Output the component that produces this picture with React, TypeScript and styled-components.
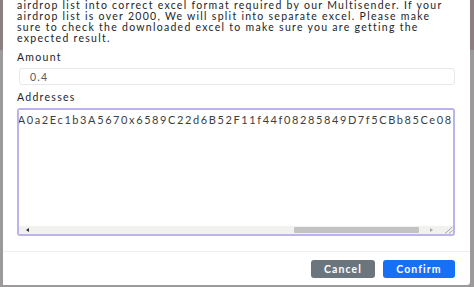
import { useEffect, useRef } from "react";
import styled, { createGlobalStyle } from "styled-components";

const GlobalStyle = createGlobalStyle`
  html, body {
    margin: 0;
    padding: 0;
    background: #9c9a9a;
  }
  body {
    font-family: Lato, "Liberation Sans", sans-serif;
  }
`;

const Backdrop = styled.div`
  width: 474px;
  height: 287px;
  display: flex;
  padding-left: 3px;
  box-sizing: border-box;
  overflow: hidden;
  background: linear-gradient(#8d7f7f 0 50px, #9c9a9a 50px);
`;

const Modal = styled.div`
  width: 467px;
  height: 285px;
  background: #ffffff;
  display: flex;
  flex-direction: column;
  border-bottom-right-radius: 3px;
`;

const Body = styled.div`
  flex: 1;
  padding: 0 15px 0 14px;
`;

const Intro = styled.p`
  margin: 0;
  font-size: 10.5px;
  line-height: 11px;
  color: #212529;
  letter-spacing: 1.28px;
  white-space: nowrap;
`;

const Label = styled.div<{ $top: number }>`
  font-size: 10.5px;
  color: #212529;
  letter-spacing: 1.28px;
  margin: ${(p) => p.$top}px 0 4px 0;
  line-height: 14px;
`;

const Input = styled.input`
  display: block;
  box-sizing: border-box;
  height: 17px;
  margin-left: 2px;
  width: calc(100% - 2px);
  padding: 0 10px;
  border: 1px solid #e6e8eb;
  border-radius: 3px;
  font-family: Lato, "Liberation Sans", sans-serif;
  font-size: 10.5px;
  color: #555a5f;
  letter-spacing: 1.2px;
  outline: none;
`;

const AreaBox = styled.div`
  height: 128px;
  box-sizing: border-box;
  border: 2px solid #bbb4ec;
  border-radius: 3px;
  display: flex;
  flex-direction: column;
  overflow: hidden;
`;

const Area = styled.textarea`
  flex: 1;
  display: block;
  width: 100%;
  box-sizing: border-box;
  padding: 3px 0 0 0;
  margin: 0;
  border: none;
  font-family: Lato, "Liberation Sans", sans-serif;
  font-size: 11px;
  line-height: 13px;
  letter-spacing: 1.6px;
  color: #3c3e42;
  white-space: pre;
  overflow: hidden;
  outline: none;
  resize: none;
  caret-color: #222;
`;

const ScrollRow = styled.div`
  height: 8px;
  display: flex;
  align-items: stretch;
  background: #f1f1ef;
`;

const ArrowButton = styled.div<{ $dir: "left" | "right" }>`
  width: 16px;
  display: flex;
  align-items: center;
  justify-content: center;

  &::before {
    content: "";
    border-top: 2px solid transparent;
    border-bottom: 2px solid transparent;
    ${(p) => (p.$dir === "left" ? "border-right: 3px solid #303030;" : "border-left: 3px solid #a8a8a8;")}
  }
`;

const Track = styled.div`
  flex: 1;
  display: flex;
  justify-content: flex-end;
  padding: 1px 4px 1px 0;
`;

const Thumb = styled.div`
  width: 125px;
  background: #c3c3c3;
  border-radius: 1px;
`;

const Corner = styled.div`
  width: 14px;
  display: flex;
  align-items: flex-end;
  justify-content: flex-end;
  background: #f1f1ef;
`;

const Footer = styled.div`
  display: flex;
  justify-content: flex-end;
  gap: 8px;
  padding: 8px 15px 7px;
  border-top: 1px solid #eeeeee;
`;

const Button = styled.button<{ $primary?: boolean }>`
  height: 18px;
  padding: 0;
  width: ${(p) => (p.$primary ? 72 : 64)}px;
  border: none;
  border-radius: 3px;
  background: ${(p) => (p.$primary ? "#1570f6" : "#6b757d")};
  color: #ffffff;
  font-family: Lato, "Liberation Sans", sans-serif;
  font-size: 10.5px;
  font-weight: 700;
  letter-spacing: 1.1px;
`;

const addresses =
  "0x1f9840a85d5aF5bf1D1762F925BDADdC4201F984" +
  "0xC02aaA39b223FE8D0A0e5C4F27eAD9083C756Cc2" +
  "0x7a250d5630B4cF539739dF2C5dAA0a2Ec1b3A567" +
  "0x6589C22d6B52F11f44f08285849D7f5CBb85Ce08";

export default function App() {
  const areaRef = useRef<HTMLTextAreaElement>(null);

  useEffect(() => {
    const el = areaRef.current;
    if (!el) return;
    el.focus();
    el.setSelectionRange(addresses.length, addresses.length);
    el.scrollLeft = el.scrollWidth;
  }, []);

  return (
    <Backdrop>
      <GlobalStyle />
      <Modal>
        <Body>
          <Intro>
            airdrop list into correct excel format required by our Multisender. If your
            <br />
            airdrop list is over 2000, We will split into separate excel. Please make
            <br />
            sure to check the downloaded excel to make sure you are getting the
            <br />
            expected result.
          </Intro>
          <Label $top={6}>Amount</Label>
          <Input defaultValue="0.4" />
          <Label $top={5}>Addresses</Label>
          <AreaBox>
            <Area ref={areaRef} defaultValue={addresses} wrap="off" spellCheck={false} />
            <ScrollRow>
              <ArrowButton $dir="left" />
              <Track>
                <Thumb />
              </Track>
              <ArrowButton $dir="right" />
              <Corner>
                <svg width="10" height="8" viewBox="0 0 10 8">
                  <path d="M2 7.5 L9.5 1 M6 7.5 L9.5 4.5" stroke="#9a9a9a" strokeWidth="0.9" fill="none" />
                </svg>
              </Corner>
            </ScrollRow>
          </AreaBox>
        </Body>
        <Footer>
          <Button>Cancel</Button>
          <Button $primary>Confirm</Button>
        </Footer>
      </Modal>
    </Backdrop>
  );
}
